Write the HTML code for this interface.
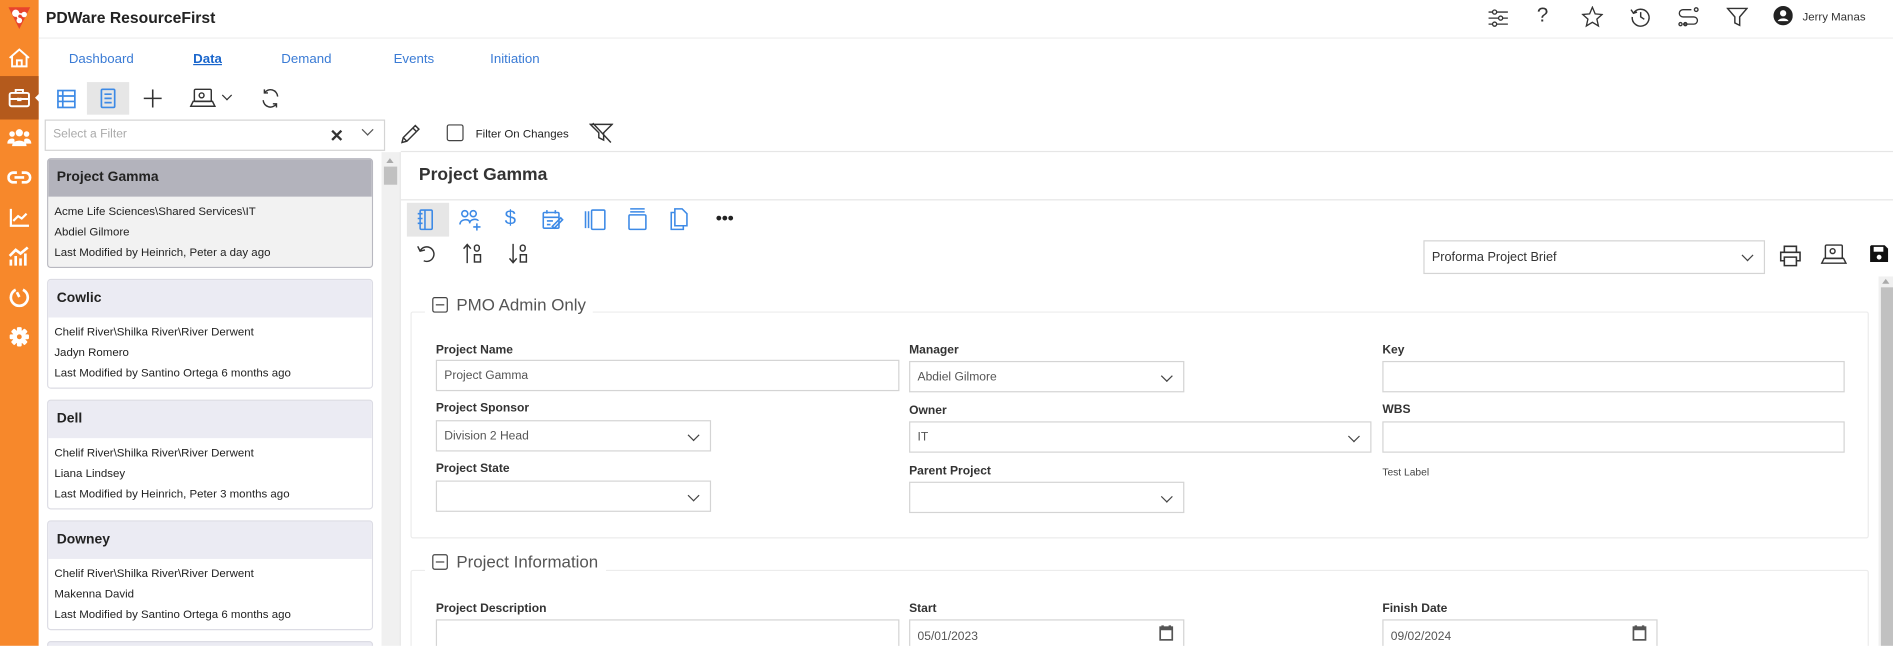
<!DOCTYPE html>
<html><head><meta charset="utf-8"><style>
*{box-sizing:border-box;margin:0;padding:0}
html,body{width:1893px;height:646px;overflow:hidden;background:#fff}
#w{position:absolute;left:0;top:0;width:1568px;height:535px;overflow:hidden;transform:scale(1.20727);transform-origin:0 0;font-family:"Liberation Sans",sans-serif;color:#222}
.a{position:absolute}
.side{left:0;top:0;width:32px;height:535px;background:#f7882b}
.si{position:absolute;left:6px;width:20px;height:20px}
.t{font-size:10px;color:#222;white-space:nowrap}
.nav{font-size:11px;color:#3a7bd5;top:43px}
.card{left:39px;width:270px;border:1px solid #dcdce4;border-radius:3px;overflow:hidden}
.ch{height:31px;background:#ebebf3;font-weight:bold;font-size:11.5px;padding:9px 7px;color:#222}
.cb{font-size:9.5px;line-height:17px;padding:4px 5px;background:#fff;height:58px}
.lbl{font-size:10px;font-weight:bold;color:#333}
.in{border:1px solid #d4d4d4;height:26px;background:#fff;font-size:10px;color:#555;padding:7px 6px}
.chev{position:absolute;right:10px;top:8px;width:7px;height:7px;border-right:1.3px solid #444;border-bottom:1.3px solid #444;transform:rotate(45deg)}
.ico{position:absolute;stroke:#3d8ae6;fill:none;stroke-width:1.3}
</style></head><body><div id="w">

<div class="a side"></div>
<svg class="si" style="top:4px;left:5px;width:22px;height:22px" viewBox="0 0 22 22"><path d="M2 2L20 2L11 20Z" fill="#e8442c"/><circle cx="8" cy="7" r="3" fill="#fff"/><circle cx="15" cy="8" r="2.3" fill="#fff"/><circle cx="11" cy="13" r="2.3" fill="#fff"/><path d="M8 7L15 8M8 7L11 13" stroke="#fff" stroke-width="1.3"/></svg>
<svg class="si" style="top:38px" viewBox="0 0 20 20" fill="none" stroke="#fff" stroke-width="1.6"><path d="M2 10L10 3L18 10M4 8V17H16V8M8 17V12H12V17"/></svg>
<div class="a" style="left:0;top:63px;width:32px;height:36px;background:#b45a1c"></div>
<div class="a" style="left:29px;top:76px;width:0;height:0;border-top:5px solid transparent;border-bottom:5px solid transparent;border-right:5px solid #fff"></div>
<svg class="si" style="top:71px" viewBox="0 0 20 20" fill="none" stroke="#fff" stroke-width="1.6"><rect x="2" y="6" width="16" height="11" rx="1.5"/><path d="M7 6V3.5H13V6M2 11H18M9 10V12H11V10"/></svg>
<svg class="si" style="top:104px" viewBox="0 0 20 20" fill="#fff"><circle cx="10" cy="6" r="3"/><circle cx="4" cy="7" r="2.3"/><circle cx="16" cy="7" r="2.3"/><path d="M4 17C4 11 16 11 16 17Z"/><path d="M0 15C0 10 6 10 6 12V15ZM20 15C20 10 14 10 14 12V15Z"/></svg>
<svg class="si" style="top:137px" viewBox="0 0 20 20" fill="none" stroke="#fff" stroke-width="2.2"><path d="M8 6H5A4 4 0 0 0 5 14H8M12 6H15A4 4 0 0 1 15 14H12M6 10H14"/></svg>
<svg class="si" style="top:170px" viewBox="0 0 20 20" fill="none" stroke="#fff" stroke-width="1.8"><path d="M3 3V17H18M5 13L9 9L12 11L16 7"/></svg>
<svg class="si" style="top:203px" viewBox="0 0 20 20" fill="none" stroke="#fff" stroke-width="2.2"><path d="M3 17V12M7 17V9M11 17V11M15 17V7M2 9L7 4L11 7L17 2"/></svg>
<svg class="si" style="top:236px" viewBox="0 0 20 20" fill="none" stroke="#fff" stroke-width="2.2"><path d="M7 4A7 7 0 1 0 13 4M10 10L8 6"/></svg>
<svg class="si" style="top:269px" viewBox="0 0 20 20"><g fill="#fff"><rect x="8" y="2" width="4" height="16" rx="1"/><rect x="8" y="2" width="4" height="16" rx="1" transform="rotate(45 10 10)"/><rect x="8" y="2" width="4" height="16" rx="1" transform="rotate(90 10 10)"/><rect x="8" y="2" width="4" height="16" rx="1" transform="rotate(135 10 10)"/><circle cx="10" cy="10" r="5.5"/></g><circle cx="10" cy="10" r="2" fill="#f7882b"/></svg>

<div class="a" style="left:38px;top:7px;font-size:13px;font-weight:bold;color:#222">PDWare ResourceFirst</div>
<div class="a" style="left:32px;top:31px;width:1536px;height:1px;background:#eee"></div>
<svg class="a" style="left:1232px;top:6px;width:18px;height:18px" viewBox="0 0 18 18" fill="none" stroke="#333" stroke-width="1.1"><path d="M1 4H17M1 9H17M1 14H17"/><circle cx="6" cy="4" r="1.7" fill="#fff"/><circle cx="11" cy="9" r="1.7" fill="#fff"/><circle cx="6" cy="14" r="1.7" fill="#fff"/></svg>
<div class="a" style="left:1273px;top:3px;font-size:17px;color:#333">?</div>
<svg class="a" style="left:1310px;top:5px;width:18px;height:18px" viewBox="0 0 18 18" fill="none" stroke="#333" stroke-width="1.1"><path d="M9 1L11.3 6.5L17 7L12.7 10.8L14 16.5L9 13.5L4 16.5L5.3 10.8L1 7L6.7 6.5Z"/></svg>
<svg class="a" style="left:1350px;top:5px;width:18px;height:18px" viewBox="0 0 18 18" fill="none" stroke="#333" stroke-width="1.2"><path d="M3 6A7 7 0 1 1 2 9M1 3L3 6L6 5M9 5V9L12 11"/></svg>
<svg class="a" style="left:1389px;top:5px;width:20px;height:18px" viewBox="0 0 20 18" fill="none" stroke="#333" stroke-width="1.1"><path d="M12 3H5A3 3 0 0 0 5 9H14A3 3 0 0 1 14 15H5"/><circle cx="16" cy="3" r="1.5"/><circle cx="3" cy="15" r="1.3"/><circle cx="7" cy="15" r="1.3"/></svg>
<svg class="a" style="left:1430px;top:5px;width:18px;height:18px" viewBox="0 0 18 18" fill="none" stroke="#333" stroke-width="1.2"><path d="M1 2H17L11 9V16L7 14V9Z"/></svg>
<svg class="a" style="left:1469px;top:5px;width:16px;height:16px" viewBox="0 0 16 16"><circle cx="8" cy="8" r="8" fill="#222"/><circle cx="8" cy="6" r="2.6" fill="#fff"/><path d="M3.5 12.5C5 9.5 11 9.5 12.5 12.5Z" fill="#fff"/></svg>
<div class="a t" style="left:1493px;top:9px;font-size:9.5px;color:#333">Jerry Manas</div>

<div class="a nav" style="left:57px">Dashboard</div>
<div class="a nav" style="left:160px;font-weight:bold;text-decoration:underline;color:#1a66cc">Data</div>
<div class="a nav" style="left:233px">Demand</div>
<div class="a nav" style="left:326px">Events</div>
<div class="a nav" style="left:406px">Initiation</div>

<svg class="ico" style="left:47px;top:74px;width:16px;height:16px;stroke-width:1.4" viewBox="0 0 16 16"><rect x="1" y="1" width="14" height="14"/><path d="M1 5.5H15M1 10H15M5 1V15"/></svg>
<div class="a" style="left:72px;top:68px;width:35px;height:27px;background:#e6e6e6"></div>
<svg class="ico" style="left:83px;top:73px;width:13px;height:17px;stroke-width:1.4" viewBox="0 0 13 17"><rect x="1" y="1" width="11" height="15" rx="1"/><path d="M3.5 5H9.5M3.5 8.5H9.5M3.5 12H9.5"/></svg>
<svg class="a" style="left:119px;top:74px;width:15px;height:15px" viewBox="0 0 15 15" stroke="#333" stroke-width="1.3"><path d="M7.5 0V15M0 7.5H15"/></svg>
<svg class="a" style="left:157px;top:73px;width:22px;height:17px" viewBox="0 0 22 17" fill="none" stroke="#333" stroke-width="1.2"><rect x="4" y="1" width="14" height="10" rx="1"/><path d="M1 15H21L19 11H3Z"/><circle cx="10" cy="6" r="2"/></svg>
<div class="a" style="left:185px;top:76px;width:6px;height:6px;border-right:1.6px solid #333;border-bottom:1.6px solid #333;transform:rotate(45deg)"></div>
<svg class="a" style="left:216px;top:73px;width:16px;height:17px" viewBox="0 0 16 17" fill="none" stroke="#333" stroke-width="1.2"><path d="M14 7A6 6 0 0 0 3 4M2 10A6 6 0 0 0 13 13M3 1V4H6M13 16V13H10"/></svg>

<div class="a in" style="left:37px;top:99px;width:282px;height:26px;color:#aaa;padding:6px 6px">Select a Filter</div>
<div class="a" style="left:273px;top:104px;font-size:14px;font-weight:bold;color:#333">✕</div>
<div class="a" style="left:301px;top:104px;width:7px;height:7px;border-right:1.3px solid #555;border-bottom:1.3px solid #555;transform:rotate(45deg)"></div>
<svg class="a" style="left:331px;top:102px;width:18px;height:18px" viewBox="0 0 18 18" fill="none" stroke="#333" stroke-width="1.2"><path d="M2 16L3 12L13 2L16 5L6 15ZM11 4L14 7M3 12L6 15"/></svg>
<div class="a" style="left:370px;top:103px;width:14px;height:14px;border:1.3px solid #444;border-radius:2px"></div>
<div class="a t" style="left:394px;top:106px;font-size:9.5px">Filter On Changes</div>
<svg class="a" style="left:488px;top:101px;width:20px;height:18px" viewBox="0 0 20 18" fill="none" stroke="#333" stroke-width="1.2"><path d="M1 2H19L12 9V15L8 13V9ZM3 1L18 17"/></svg>
<div class="a" style="left:332px;top:125px;width:1236px;height:1px;background:#e6e6e6"></div>

<div class="a card" style="top:131px;border-color:#b8b8c0"><div class="ch" style="background:#b3b3bc">Project Gamma</div><div class="cb" style="background:#f2f2f2">Acme Life Sciences\Shared Services\IT<br>Abdiel Gilmore<br>Last Modified by Heinrich, Peter a day ago</div></div>
<div class="a card" style="top:231px"><div class="ch">Cowlic</div><div class="cb">Chelif River\Shilka River\River Derwent<br>Jadyn Romero<br>Last Modified by Santino Ortega 6 months ago</div></div>
<div class="a card" style="top:331px"><div class="ch">Dell</div><div class="cb">Chelif River\Shilka River\River Derwent<br>Liana Lindsey<br>Last Modified by Heinrich, Peter 3 months ago</div></div>
<div class="a card" style="top:431px"><div class="ch">Downey</div><div class="cb">Chelif River\Shilka River\River Derwent<br>Makenna David<br>Last Modified by Santino Ortega 6 months ago</div></div>
<div class="a card" style="top:531px;height:10px;background:#ebebf3"></div>
<div class="a" style="left:316px;top:126px;width:15px;height:409px;background:#f0f0f0"></div>
<div class="a" style="left:320px;top:131px;width:0;height:0;border-left:3px solid transparent;border-right:3px solid transparent;border-bottom:4px solid #aaa"></div>
<div class="a" style="left:318px;top:138px;width:11px;height:15px;background:#c1c1c1"></div>
<div class="a" style="left:331px;top:126px;width:1px;height:409px;background:#e6e6e6"></div>

<div class="a" style="left:347px;top:137px;font-size:14.5px;font-weight:bold;color:#333">Project Gamma</div>
<div class="a" style="left:332px;top:165px;width:1236px;height:1px;background:#e6e6e6"></div>
<div class="a" style="left:337px;top:168px;width:35px;height:28px;background:#e6e6e6"></div>
<svg class="ico" style="left:345px;top:173px;width:14px;height:18px" viewBox="0 0 14 18"><rect x="3" y="1" width="10" height="16" rx="1"/><path d="M7 1V17M1 4H5M1 8H5M1 12H5"/></svg>
<svg class="ico" style="left:380px;top:173px;width:20px;height:18px" viewBox="0 0 20 18"><circle cx="5" cy="4" r="2.5"/><circle cx="12" cy="4" r="2.5"/><path d="M1 13C1 8 9 8 9 11M9 12C9 8 16 8 16 10"/><path d="M15 12V18M12 15H18"/></svg>
<div class="a" style="left:418px;top:171px;font-size:17px;color:#3d8ae6">$</div>
<svg class="ico" style="left:449px;top:173px;width:18px;height:18px" viewBox="0 0 18 18"><rect x="1" y="3" width="13" height="13" rx="1"/><path d="M1 7H14M4 1V4M11 1V4M4 10H9M4 13H7M10 16L17 9L15.5 7.5L8.5 14.5Z"/></svg>
<svg class="ico" style="left:484px;top:173px;width:18px;height:18px" viewBox="0 0 18 18"><rect x="6" y="1" width="11" height="16" rx="1"/><path d="M1 2V16M3.5 2V16"/></svg>
<svg class="ico" style="left:520px;top:172px;width:16px;height:19px" viewBox="0 0 16 19"><rect x="1" y="6" width="14" height="12" rx="1"/><path d="M2 1H14M2 3.5H14"/></svg>
<svg class="ico" style="left:555px;top:172px;width:15px;height:19px" viewBox="0 0 15 19"><path d="M4 1H10L14 5V15H4ZM4 4H1V18H11V15"/></svg>
<div class="a" style="left:593px;top:172px;font-size:14px;font-weight:bold;color:#222">•••</div>
<svg class="a" style="left:345px;top:202px;width:16px;height:16px" viewBox="0 0 16 16" fill="none" stroke="#333" stroke-width="1.2"><path d="M3 6A6 6 0 1 1 6 14M1 2L3 6L7 5"/></svg>
<svg class="a" style="left:382px;top:201px;width:18px;height:18px" viewBox="0 0 18 18" fill="none" stroke="#333" stroke-width="1.2"><path d="M5 17V2M2 5L5 1.5L8 5"/><rect x="11" y="2" width="4" height="5" rx="2"/><rect x="11" y="10" width="5" height="6"/></svg>
<svg class="a" style="left:420px;top:201px;width:18px;height:18px" viewBox="0 0 18 18" fill="none" stroke="#333" stroke-width="1.2"><path d="M5 1V16M2 13L5 16.5L8 13"/><rect x="11" y="2" width="4" height="5" rx="2"/><rect x="11" y="10" width="5" height="6"/></svg>

<div class="a in" style="left:1179px;top:199px;width:283px;height:28px;color:#333;font-size:10.5px;padding:7px 6px">Proforma Project Brief<div class="chev" style="top:8px"></div></div>
<svg class="a" style="left:1474px;top:203px;width:18px;height:18px" viewBox="0 0 18 18" fill="none" stroke="#333" stroke-width="1.3"><path d="M4 6V1H14V6M4 13H1V6H17V13H14M4 10H14V17H4Z"/></svg>
<svg class="a" style="left:1508px;top:202px;width:22px;height:18px" viewBox="0 0 22 18" fill="none" stroke="#333" stroke-width="1.2"><rect x="4" y="1" width="14" height="11" rx="1"/><path d="M1 16H21L19 12H3Z"/><circle cx="10" cy="6" r="2"/></svg>
<svg class="a" style="left:1549px;top:203px;width:15px;height:15px" viewBox="0 0 15 15"><path d="M0 1V14H15V3L12 0H1Z" fill="#111"/><rect x="3" y="1.5" width="8" height="4" fill="#fff"/><circle cx="7.5" cy="10" r="2" fill="#fff"/></svg>
<div class="a" style="left:1556px;top:229px;width:12px;height:306px;background:#f0f0f0"></div>
<div class="a" style="left:1559px;top:231px;width:0;height:0;border-left:3px solid transparent;border-right:3px solid transparent;border-bottom:4px solid #aaa"></div>
<div class="a" style="left:1558px;top:238px;width:10px;height:297px;background:#c1c1c1"></div>

<div class="a" style="left:340px;top:258px;width:1208px;height:188px;border:1px solid #ececec;border-radius:2px"></div>
<div class="a" style="left:352px;top:242px;background:#fff;padding:0 6px;font-size:14px;color:#555;height:20px;display:flex;align-items:center"><span style="display:inline-block;width:13px;height:13px;border:1.2px solid #444;border-radius:2px;position:relative;margin-right:7px"><span style="position:absolute;left:2px;top:5px;width:7px;height:1.2px;background:#444"></span></span>PMO Admin Only</div>

<div class="a lbl" style="left:361px;top:285px">Project Name</div>
<div class="a in" style="left:361px;top:298px;width:384px">Project Gamma</div>
<div class="a lbl" style="left:361px;top:333px">Project Sponsor</div>
<div class="a in" style="left:361px;top:348px;width:228px">Division 2 Head<div class="chev"></div></div>
<div class="a lbl" style="left:361px;top:383px">Project State</div>
<div class="a in" style="left:361px;top:398px;width:228px"><div class="chev"></div></div>

<div class="a lbl" style="left:753px;top:285px">Manager</div>
<div class="a in" style="left:753px;top:299px;width:228px">Abdiel Gilmore<div class="chev"></div></div>
<div class="a lbl" style="left:753px;top:335px">Owner</div>
<div class="a in" style="left:753px;top:349px;width:383px">IT<div class="chev"></div></div>
<div class="a lbl" style="left:753px;top:385px">Parent Project</div>
<div class="a in" style="left:753px;top:399px;width:228px"><div class="chev"></div></div>

<div class="a lbl" style="left:1145px;top:285px">Key</div>
<div class="a in" style="left:1145px;top:299px;width:383px"></div>
<div class="a lbl" style="left:1145px;top:334px">WBS</div>
<div class="a in" style="left:1145px;top:349px;width:383px"></div>
<div class="a" style="left:1145px;top:386px;font-size:8.5px;color:#444">Test Label</div>

<div class="a" style="left:340px;top:472px;width:1208px;height:80px;border:1px solid #ececec;border-radius:2px"></div>
<div class="a" style="left:352px;top:455px;background:#fff;padding:0 6px;font-size:14px;color:#555;height:20px;display:flex;align-items:center"><span style="display:inline-block;width:13px;height:13px;border:1.2px solid #444;border-radius:2px;position:relative;margin-right:7px"><span style="position:absolute;left:2px;top:5px;width:7px;height:1.2px;background:#444"></span></span>Project Information</div>
<div class="a lbl" style="left:361px;top:499px">Project Description</div>
<div class="a in" style="left:361px;top:513px;width:384px;height:40px"></div>
<div class="a lbl" style="left:753px;top:499px">Start</div>
<div class="a in" style="left:753px;top:513px;width:228px;padding-top:8px">05/01/2023</div>
<div class="a lbl" style="left:1145px;top:499px">Finish Date</div>
<div class="a in" style="left:1145px;top:513px;width:228px;padding-top:8px">09/02/2024</div>
<svg class="a" style="left:960px;top:517px;width:12px;height:14px" viewBox="0 0 12 14" fill="none" stroke="#555" stroke-width="1.4"><rect x="1" y="2.5" width="10" height="10.5"/><path d="M1 4H11M3 1V3M9 1V3" stroke-width="2"/></svg>
<svg class="a" style="left:1352px;top:517px;width:12px;height:14px" viewBox="0 0 12 14" fill="none" stroke="#555" stroke-width="1.4"><rect x="1" y="2.5" width="10" height="10.5"/><path d="M1 4H11M3 1V3M9 1V3" stroke-width="2"/></svg>

</div></body></html>
